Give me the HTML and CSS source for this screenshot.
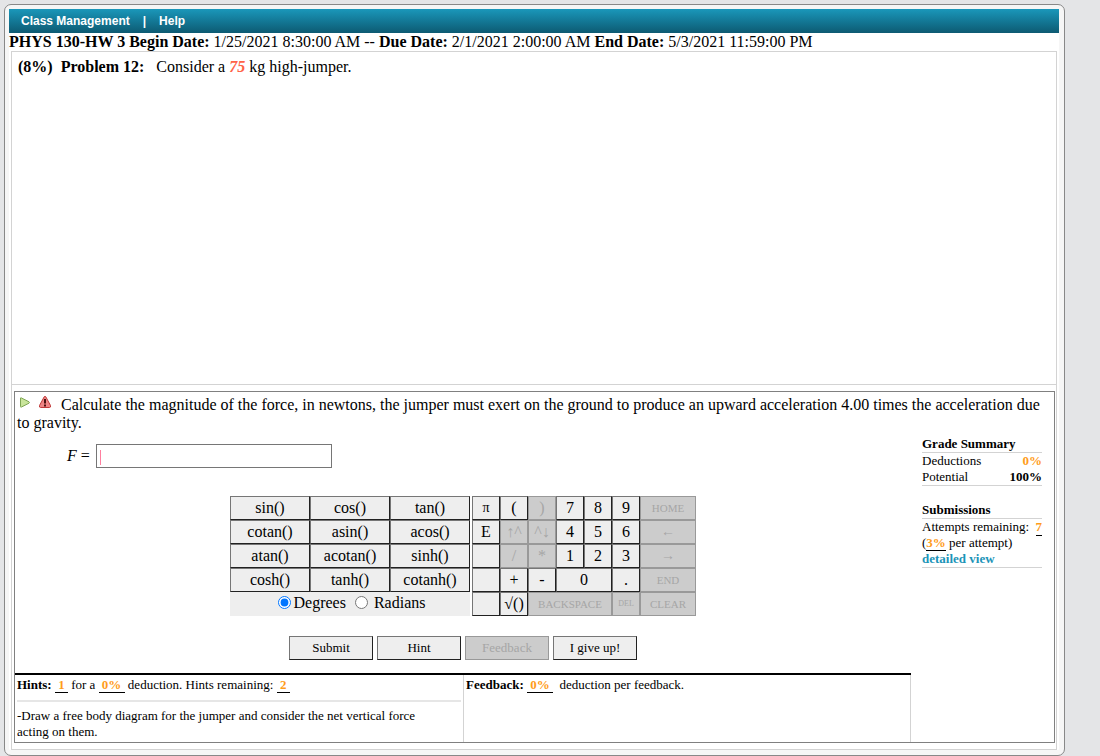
FILE: index.html
```html
<!DOCTYPE html>
<html lang="en">
<head>
<meta charset="utf-8">
<title>PHYS 130-HW 3</title>
<link rel="stylesheet" href="styles.css">
</head>
<body>
<main class="sheet">
  <nav class="menubar">
    <a class="menu-link" href="#">Class Management</a>
    <span class="menu-divider">|</span>
    <a class="menu-link" href="#">Help</a>
  </nav>
  <p class="assignment"><b>PHYS 130-HW 3 Begin Date:</b> 1/25/2021 8:30:00 AM -- <b>Due Date:</b> 2/1/2021 2:00:00 AM <b>End Date:</b> 5/3/2021 11:59:00 PM</p>
  <section class="problem">
    <p><b>(8%)&nbsp; Problem 12:</b> &nbsp; Consider a <em class="value">75</em> kg high-jumper.</p>
  </section>
  <section class="work">
    <div class="part">
      <p class="question">
        <svg class="icon icon-play" viewBox="0 0 12 12" aria-hidden="true">
          <path d="M1.5 1 Q1.5 0.5 2.5 1 L10 4.8 Q11 5.5 10 6.2 L2.5 10 Q1.5 10.5 1.5 9.5 Z" fill="#c9e59b" stroke="#7fa654" stroke-linejoin="round"/>
        </svg>
        <svg class="icon icon-alert" viewBox="0 0 14 14" aria-hidden="true">
          <path d="M6.2 1.8 Q7 0.6 7.8 1.8 L12.5 10.5 Q13 12.5 11.5 12.5 H2.5 Q1 12.5 1.5 10.5 Z" fill="#ee8585" stroke="#c03a3a" stroke-linejoin="round"/>
          <path d="M7 4 V8.5 M7 9.5 V11.5" stroke="#4a1010" stroke-width="2"/>
        </svg>
        Calculate the magnitude of the force, in newtons, the jumper must exert on the ground to produce an upward acceleration 4.00 times the acceleration due to gravity.
      </p>
      <div class="columns">
        <form class="answer-area">
          <div class="answer">
            <label for="force"><i>F</i> =</label>
            <span class="field"><input class="answer-input" id="force" type="text"><span class="caret"></span></span>
          </div>
          <div class="pads">
            <div class="functions">
              <button type="button" class="key">sin()</button>
              <button type="button" class="key">cos()</button>
              <button type="button" class="key">tan()</button>
              <button type="button" class="key">cotan()</button>
              <button type="button" class="key">asin()</button>
              <button type="button" class="key">acos()</button>
              <button type="button" class="key">atan()</button>
              <button type="button" class="key">acotan()</button>
              <button type="button" class="key">sinh()</button>
              <button type="button" class="key">cosh()</button>
              <button type="button" class="key">tanh()</button>
              <button type="button" class="key">cotanh()</button>
              <div class="angle">
                <input class="radio" type="radio" name="angle" id="degrees" checked><label class="degrees" for="degrees">Degrees</label>
                <input class="radio" type="radio" name="angle" id="radians"><label class="radians" for="radians">Radians</label>
              </div>
            </div>
            <div class="numbers">
              <button type="button" class="key symbol">π</button>
              <button type="button" class="key">(</button>
              <button type="button" class="key" disabled>)</button>
              <button type="button" class="key">7</button>
              <button type="button" class="key">8</button>
              <button type="button" class="key">9</button>
              <button type="button" class="key small" disabled>HOME</button>
              <button type="button" class="key">E</button>
              <button type="button" class="key" disabled>↑^</button>
              <button type="button" class="key" disabled>^↓</button>
              <button type="button" class="key">4</button>
              <button type="button" class="key">5</button>
              <button type="button" class="key">6</button>
              <button type="button" class="key symbol" disabled>←</button>
              <button type="button" class="key" aria-label="blank"></button>
              <button type="button" class="key" disabled>/</button>
              <button type="button" class="key" disabled>*</button>
              <button type="button" class="key">1</button>
              <button type="button" class="key">2</button>
              <button type="button" class="key">3</button>
              <button type="button" class="key symbol" disabled>→</button>
              <button type="button" class="key" aria-label="blank"></button>
              <button type="button" class="key">+</button>
              <button type="button" class="key">-</button>
              <button type="button" class="key span-2">0</button>
              <button type="button" class="key">.</button>
              <button type="button" class="key small" disabled>END</button>
              <button type="button" class="key" aria-label="blank"></button>
              <button type="button" class="key">√()</button>
              <button type="button" class="key small span-3" disabled>BACKSPACE</button>
              <button type="button" class="key tiny" disabled>DEL</button>
              <button type="button" class="key small" disabled>CLEAR</button>
            </div>
          </div>
          <div class="actions">
            <button type="button" class="key action">Submit</button>
            <button type="button" class="key action">Hint</button>
            <button type="button" class="key action" disabled>Feedback</button>
            <button type="button" class="key action">I give up!</button>
          </div>
        </form>
        <aside class="summary">
          <h2 class="summary-title">Grade Summary</h2>
          <dl class="summary-list">
            <div class="summary-row"><dt>Deductions</dt><dd class="amount">0%</dd></div>
            <div class="summary-row"><dt>Potential</dt><dd>100%</dd></div>
          </dl>
          <h2 class="summary-title">Submissions</h2>
          <div class="summary-list">
            <div class="summary-row"><span>Attempts remaining:</span><span class="amount lined">7</span></div>
            <div>(<span class="amount lined">3%</span> per attempt)</div>
            <a class="detail-link" href="#">detailed view</a>
          </div>
        </aside>
        <div class="help">
          <section class="hints">
            <p class="help-head"><b>Hints:</b> <span class="amount lined">&nbsp;1&nbsp;</span> for a <span class="amount lined">&nbsp;0%&nbsp;</span> deduction. Hints remaining: <span class="amount lined">&nbsp;2&nbsp;</span></p>
            <p class="hint-text">-Draw a free body diagram for the jumper and consider the net vertical force acting on them.</p>
          </section>
          <section class="feedback">
            <p><b>Feedback:</b> <span class="amount lined">&nbsp;0%&nbsp;</span> &nbsp;deduction per feedback.</p>
          </section>
        </div>
      </div>
    </div>
  </section>
</main>
</body>
</html>
```
FILE: styles.css
```css
* {
  box-sizing: border-box;
}

body {
  margin: 0;
  padding: 4px 35px 0 4px;
  background: #e4e5e7;
  color: #000;
  font: 16px/18px "Liberation Serif", "Times New Roman", serif;
}

p, h2, dl, dd {
  margin: 0;
}

.sheet {
  padding: 4px 5px 5px 4px;
  border: 1px solid #888;
  border-radius: 7px;
  background: linear-gradient(#fff, #fff) content-box, #f6f6f6;
}

.menubar {
  display: flex;
  gap: 13px;
  padding: 0 12px;
  background: linear-gradient(#1a97ba, #0d5a72);
  color: #fff;
  font: bold 12px/24px "Liberation Sans", Arial, sans-serif;
}

.menu-link {
  color: inherit;
  text-decoration: none;
}

.problem {
  min-height: 333px;
  margin: 0 2px;
  padding: 6px;
  border: 1px solid #d3d3d3;
  border-bottom: 0;
}

.value {
  color: #ff6347;
  font-weight: bold;
}

.work {
  margin: 0 2px;
  padding: 6px 1px 6px 2px;
  border: 1px solid #d3d3d3;
}

.part {
  border: 1px solid #808080;
}

.question {
  padding: 3px 2px 0;
}

.icon {
  vertical-align: 1px;
}

.icon-play {
  width: 12px;
  height: 12px;
  margin-right: 3px;
  margin-left: 2px;
}

.icon-alert {
  width: 14px;
  height: 14px;
  margin-right: 5px;
}

.columns {
  display: grid;
  grid-template-columns: 1fr 143px;
  grid-template-rows: auto 1fr;
}

.answer-area {
  display: flex;
  flex-direction: column;
  gap: 20px;
  padding: 12px 0 13px;
}

.answer {
  display: flex;
  align-items: center;
  gap: 6px;
  margin-bottom: 8px;
  padding-left: 52px;
}

.field {
  position: relative;
  display: flex;
}

.answer-input {
  width: 236px;
  height: 24px;
  padding: 2px 6px;
  border: 1px solid #767676;
  font: inherit;
}

.caret {
  position: absolute;
  top: 6px;
  left: 4px;
  width: 1px;
  height: 15px;
  background: #ff7f9f;
}

.pads {
  display: flex;
  justify-content: center;
  gap: 2px;
}

.functions {
  display: grid;
  grid-template-columns: repeat(3, 80px);
  grid-auto-rows: 24px;
  background: #eee;
}

.numbers {
  display: grid;
  grid-template-columns: repeat(6, 28px) 56px;
  grid-auto-rows: 24px;
}

.key {
  padding: 0;
  border: 1px solid;
  border-color: #767676 #212121 #212121 #767676;
  background: #eee;
  color: #000;
  font: 16px/18px "Liberation Serif", "Times New Roman", serif;
}

.key:disabled {
  border-color: #999;
  background: #ccc;
  color: #a6a6a6;
}

.small {
  font-size: 11px;
}

.symbol {
  font-size: 14px;
}

.tiny {
  font-size: 8px;
}

.span-2 {
  grid-column: span 2;
}

.span-3 {
  grid-column: span 3;
}

.angle {
  display: flex;
  grid-column: span 3;
  align-items: center;
  justify-content: center;
  padding-bottom: 3px;
}

.radio {
  width: 13px;
  height: 13px;
  margin: 0 3px;
}

.degrees {
  margin-right: 6px;
}

.radians {
  margin-left: 3px;
}

.actions {
  display: flex;
  justify-content: center;
  gap: 4px;
}

.action {
  width: 84px;
  height: 24px;
  font-size: 13px;
}

.summary {
  grid-row: span 2;
  padding: 4px 12px 0 11px;
  font-size: 13px;
  line-height: 16px;
}

.summary-title {
  font-size: 13px;
  line-height: 16px;
  border-bottom: 1px solid #d3d3d3;
}

.summary-list {
  margin-bottom: 16px;
  border-bottom: 1px solid #d3d3d3;
}

.summary-row {
  display: flex;
  align-items: flex-start;
  justify-content: space-between;
  height: 16px;
}

.summary dd,
.amount {
  font-weight: bold;
}

.amount {
  color: #ff9c1a;
}

.lined {
  border-bottom: 1px solid #000;
}

.detail-link {
  display: block;
  color: #1c94b8;
  font-weight: bold;
  text-decoration: none;
}

.help {
  display: grid;
  grid-template-columns: 1fr 1fr;
  border-top: 2px solid #000;
  font-size: 13px;
  line-height: 16px;
}

.hints {
  padding: 2px;
}

.help-head {
  padding-bottom: 7px;
  border-bottom: 2px solid #e6e6e6;
}

.hint-text {
  padding: 6px 24px 0 0;
}

.feedback {
  padding: 2px;
  border: solid #d3d3d3;
  border-width: 0 1px;
}
```
